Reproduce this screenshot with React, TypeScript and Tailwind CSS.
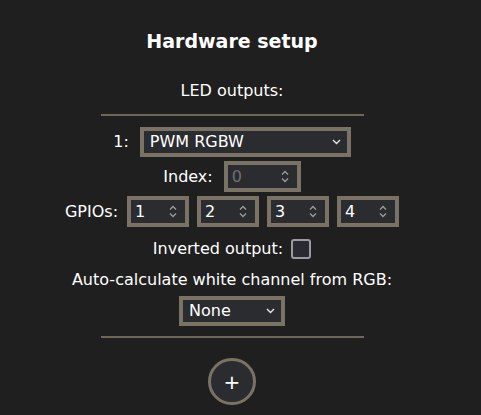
import React from 'react';

const gpios = ['1', '2', '3', '4'];

function Spinner() {
  return (
    <svg width="8" height="15" viewBox="0 0 8 15" className="shrink-0 text-[#9a9a9a]">
      <path d="M1 5.5 L4 2.5 L7 5.5" fill="none" stroke="currentColor" strokeWidth="1.4" />
      <path d="M1 9.5 L4 12.5 L7 9.5" fill="none" stroke="currentColor" strokeWidth="1.4" />
    </svg>
  );
}

function Chevron() {
  return (
    <svg width="9" height="6" viewBox="0 0 9 6" className="shrink-0 text-[#e6e6e6]">
      <path d="M1 1 L4.5 4.5 L8 1" fill="none" stroke="currentColor" strokeWidth="1.4" />
    </svg>
  );
}

function NumBox({ value, width, muted }: { value: string; width: string; muted?: boolean }) {
  return (
    <div className={`flex h-[31px] items-center border-4 border-[#7a7264] bg-[#2a2c2f] pl-[4px] pr-[8px] ${width}`}>
      <span className={`flex-1 ${muted ? 'text-[#6f6f6f]' : 'text-white'}`}>{value}</span>
      <Spinner />
    </div>
  );
}

function SelectBox({ value, width }: { value: string; width: string }) {
  return (
    <div className={`flex h-[30px] items-center border-4 border-[#7a7264] bg-[#2a2c2f] pl-[6px] pr-[6px] ${width}`}>
      <span className="flex-1 text-white">{value}</span>
      <Chevron />
    </div>
  );
}

export default function App() {
  return (
    <div className="min-h-[415px] w-full bg-[#1f1f1f] font-['DejaVu_Sans',Verdana,sans-serif] text-[16px] text-white">
      <div className="flex w-[464px] flex-col items-center">
        <h2 className="mt-[29px] text-[19px] font-bold leading-[24px]">Hardware setup</h2>

        <p className="mt-[28px] leading-[20px]">LED outputs:</p>
        <div className="mt-[13px] h-[2px] w-[263px] bg-[#6e6658]" />

        {/* output 1 */}
        <div className="mt-[11px] flex items-center gap-[11px]">
          <span>1:</span>
          <SelectBox value="PWM RGBW" width="w-[211px]" />
        </div>

        <div className="mt-[4px] flex items-center gap-[11px]">
          <span>Index:</span>
          <NumBox value="0" width="w-[77px]" muted />
        </div>

        <div className="mt-[4px] flex items-center gap-[8px]">
          <span className="mr-[1px]">GPIOs:</span>
          {gpios.map((g) => (
            <NumBox key={g} value={g} width="w-[62px]" />
          ))}
        </div>

        <div className="mt-[10px] flex items-center gap-[8px]">
          <span>Inverted output:</span>
          <div className="h-[20px] w-[20px] rounded-[3px] border-2 border-[#9a9aa2] bg-[#2b2a33]" />
        </div>

        <p className="mt-[9px] leading-[20px]">Auto-calculate white channel from RGB:</p>
        <div className="mt-[6px]">
          <SelectBox value="None" width="w-[106px]" />
        </div>
        <div className="mt-[10px] h-[2px] w-[263px] bg-[#6e6658]" />

        <button className="mt-[20px] flex h-[47px] w-[48px] items-center justify-center rounded-full border-[3px] border-[#7a7264] bg-[#2a2c2f] text-[20px] leading-none text-white">
          +
        </button>
      </div>
    </div>
  );
}
